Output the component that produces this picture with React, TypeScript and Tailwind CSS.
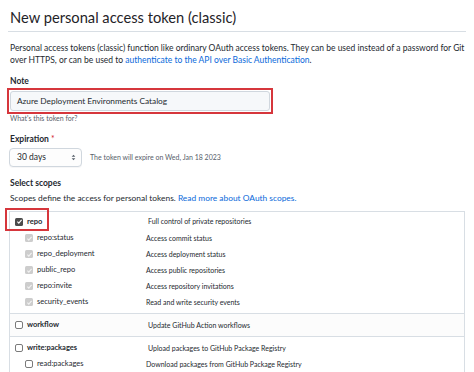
import React from "react";

type Scope = { name: string; desc: string; state: "checked" | "disabled" | "off"; sub?: boolean };

const groups: Scope[][] = [
  [
    { name: "repo", desc: "Full control of private repositories", state: "checked" },
    { name: "repo:status", desc: "Access commit status", state: "disabled", sub: true },
    { name: "repo_deployment", desc: "Access deployment status", state: "disabled", sub: true },
    { name: "public_repo", desc: "Access public repositories", state: "disabled", sub: true },
    { name: "repo:invite", desc: "Access repository invitations", state: "disabled", sub: true },
    { name: "security_events", desc: "Read and write security events", state: "disabled", sub: true },
  ],
  [{ name: "workflow", desc: "Update GitHub Action workflows", state: "off" }],
  [
    { name: "write:packages", desc: "Upload packages to GitHub Package Registry", state: "off" },
    { name: "read:packages", desc: "Download packages from GitHub Package Registry", state: "off", sub: true },
  ],
];

function Check({ state }: { state: Scope["state"] }) {
  if (state === "off") {
    return <span className="block h-[8px] w-[8px] shrink-0 rounded-[2px] border border-[#7a7a7a] bg-white" />;
  }
  const bg = state === "checked" ? "bg-[#4b4b4b]" : "bg-[#cdcdcd]";
  return (
    <span className={`flex h-[8px] w-[8px] shrink-0 items-center justify-center rounded-[1.5px] ${bg}`}>
      <svg viewBox="0 0 8 8" className="h-[7px] w-[7px]">
        <path d="M1.6 4.2 L3.2 5.8 L6.4 2.2" fill="none" stroke={state === "checked" ? "#ffffff" : "#f2f2f2"} strokeWidth="1.3" />
      </svg>
    </span>
  );
}

function ScopeRow({ scope, first }: { scope: Scope; first?: boolean }) {
  return (
    <div className={`flex items-center ${first ? "h-[17px]" : "h-[16px]"} ${scope.sub ? "pl-[15px]" : "pl-[5px]"}`}>
      <Check state={scope.state} />
      <span
        className={`ml-[4px] shrink-0 text-[7.5px] text-[#24292f] ${scope.sub ? "w-[109px]" : "w-[121px] font-bold"}`}
      >
        {scope.name}
      </span>
      <span className="text-[7px] text-[#24292f]">{scope.desc}</span>
    </div>
  );
}

export default function App() {
  return (
    <div className="h-[372px] w-[474px] overflow-hidden bg-white font-['Lato',sans-serif] text-[#24292f]">
      <div className="ml-[8px] w-[458px] pt-[7px]">
        <h1 className="border-b border-[#d8dee4] pb-[4px] pl-[2px] text-[14.7px] leading-[20px] font-normal text-[#1f2328]">
          New personal access token (classic)
        </h1>

        <p className="mt-[10px] pl-[2px] text-[8.5px] leading-[12px] whitespace-nowrap">
          Personal access tokens (classic) function like ordinary OAuth access tokens. They can be used instead of a password for Git
          <br />
          over HTTPS, or can be used to <span className="text-[#0969da]">authenticate to the API over Basic Authentication</span>.
        </p>

        <div className="mt-[9px] pl-[2px] text-[8.5px] leading-[12px] font-bold">Note</div>
        <div className="ml-[-1px] mt-[1px] h-[26px] w-[266px] border-2 border-[#d6363c] p-[1px]">
          <div className="flex h-full items-center rounded-[3px] border border-[#d0d7de] bg-[#f6f8fa] pl-[6px] text-[8.3px]">
            Azure Deployment Environments Catalog
          </div>
        </div>
        <div className="pl-[2px] text-[7px] leading-[8px] text-[#57606a]">What's this token for?</div>

        <div className="mt-[11px] pl-[2px] text-[8.5px] leading-[12px] font-bold">
          Expiration <span className="font-normal text-[#cf222e]">*</span>
        </div>
        <div className="mt-[3px] flex items-center">
          <div className="ml-[1px] flex h-[19px] w-[73px] items-center justify-between rounded-[4px] border border-[#d0d7de] bg-[#fdfdfd] pl-[7px] pr-[5px] text-[8.5px] shadow-[0_1px_0_rgba(31,35,40,0.04)]">
            <span>30 days</span>
            <svg viewBox="0 0 6 8" className="h-[7px] w-[5px]">
              <path d="M0.8 3 L3 0.8 L5.2 3 Z M0.8 5 L3 7.2 L5.2 5 Z" fill="#57606a" />
            </svg>
          </div>
          <span className="ml-[8px] text-[7px] text-[#57606a]">The token will expire on Wed, Jan 18 2023</span>
        </div>

        <div className="mt-[10px] pl-[2px] text-[8.5px] leading-[12px] font-bold">Select scopes</div>
        <div className="mt-[3px] pl-[2px] text-[8.4px] leading-[12px] whitespace-nowrap">
          Scopes define the access for personal tokens. <span className="text-[#0969da]">Read more about OAuth scopes.</span>
        </div>

        <div className="relative ml-[1px] mt-[7px] w-[456px] border border-[#d8dee4]">
          <div className="absolute left-[-5px] top-[-4px] h-[23px] w-[44px] border-2 border-[#d6363c]" />
          {groups.map((g, gi) => (
            <div
              key={gi}
              className={`${gi > 0 ? "border-t border-[#d8dee4] pt-[3px]" : "pt-[1px]"} ${gi === 1 ? "bg-[#fcfcfc]" : ""} pb-[3px]`}
            >
              {g.map((s, si) => (
                <ScopeRow key={s.name} scope={s} first={gi === 0 && si === 0} />
              ))}
            </div>
          ))}
        </div>
      </div>
    </div>
  );
}
